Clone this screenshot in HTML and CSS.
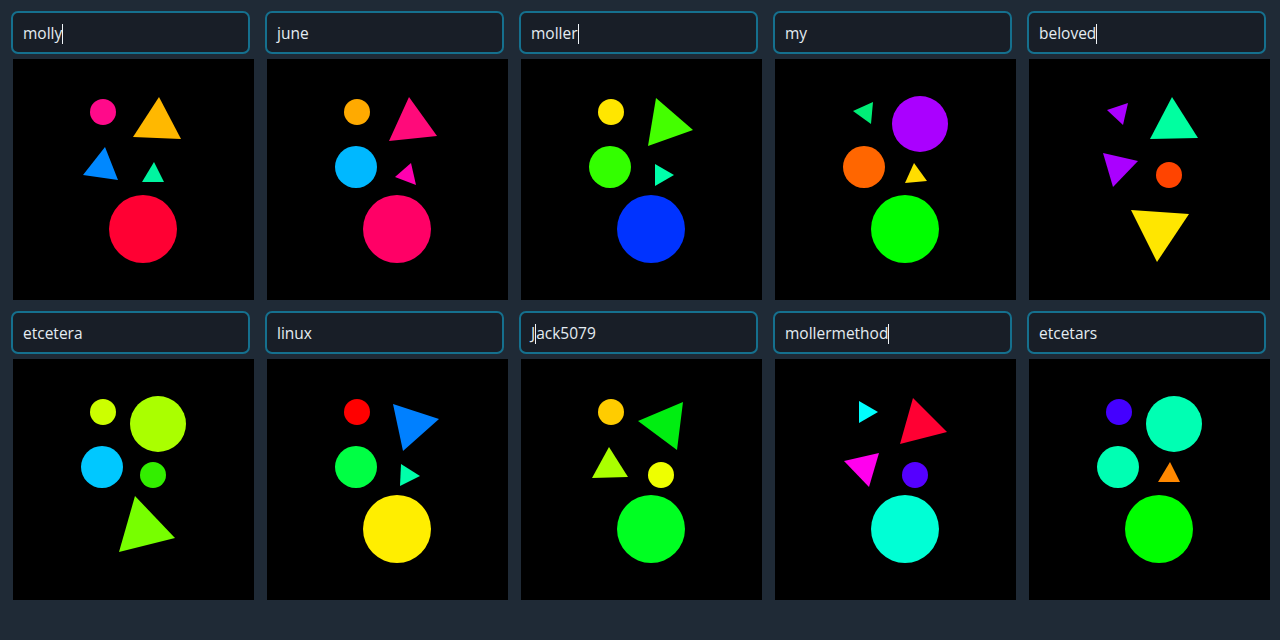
FILE: index.html
```html
<!DOCTYPE html>
<html>
<head>
<meta charset="utf-8">
<link rel="stylesheet" href="styles.css">
</head>
<body>
<div class="grid">
  <div class="cell">
    <div class="field">molly<span class="caret"></span></div>
    <svg class="art" viewBox="0 0 241 241">
      <rect width="241" height="241" fill="#000"/>
      <circle cx="90" cy="53" r="13" fill="#ff0a8a"/>
      <polygon points="146,38 120,78 168,80" fill="#ffb800"/>
      <polygon points="92,88 70,116 105,121" fill="#0088ff"/>
      <polygon points="141,103 129,123 151,123" fill="#00f5a0"/>
      <circle cx="130" cy="170" r="34" fill="#ff0033"/>
    </svg>
  </div>
  <div class="cell">
    <div class="field">june</div>
    <svg class="art" viewBox="0 0 241 241">
      <rect width="241" height="241" fill="#000"/>
      <circle cx="90" cy="53" r="13" fill="#ffaa00"/>
      <polygon points="142,38 122,82 170,77" fill="#ff0a7a"/>
      <circle cx="89" cy="108" r="21" fill="#00b8ff"/>
      <polygon points="144,104 128,118 149,126" fill="#ff00b0"/>
      <circle cx="130" cy="170" r="34" fill="#ff0066"/>
    </svg>
  </div>
  <div class="cell">
    <div class="field">moller<span class="caret"></span></div>
    <svg class="art" viewBox="0 0 241 241">
      <rect width="241" height="241" fill="#000"/>
      <circle cx="90" cy="53" r="13" fill="#ffe600"/>
      <polygon points="135,39 127,87 172,71" fill="#44ff00"/>
      <circle cx="89" cy="108" r="21" fill="#33ff00"/>
      <polygon points="134,105 134,127 153,116" fill="#00ffaa"/>
      <circle cx="130" cy="170" r="34" fill="#0033ff"/>
    </svg>
  </div>
  <div class="cell">
    <div class="field">my</div>
    <svg class="art" viewBox="0 0 241 241">
      <rect width="241" height="241" fill="#000"/>
      <polygon points="98,43 78,52 96,65" fill="#00ee77"/>
      <circle cx="145" cy="65" r="28" fill="#aa00ff"/>
      <circle cx="89" cy="108" r="21" fill="#ff6600"/>
      <polygon points="139,104 130,124 152,122" fill="#ffdd00"/>
      <circle cx="130" cy="170" r="34" fill="#00ff00"/>
    </svg>
  </div>
  <div class="cell">
    <div class="field">beloved<span class="caret"></span></div>
    <svg class="art" viewBox="0 0 241 241">
      <rect width="241" height="241" fill="#000"/>
      <polygon points="99,44 78,51 94,66" fill="#aa00ff"/>
      <polygon points="143,38 121,80 169,79" fill="#00ffa0"/>
      <polygon points="74,94 109,102 84,128" fill="#aa00ff"/>
      <circle cx="140" cy="116" r="13" fill="#ff4400"/>
      <polygon points="102,151 160,155 128,203" fill="#ffe600"/>
    </svg>
  </div>
  <div class="cell">
    <div class="field">etcetera</div>
    <svg class="art" viewBox="0 0 241 241">
      <rect width="241" height="241" fill="#000"/>
      <circle cx="90" cy="53" r="13" fill="#ccff00"/>
      <circle cx="145" cy="65" r="28" fill="#aaff00"/>
      <circle cx="89" cy="108" r="21" fill="#00c8ff"/>
      <circle cx="140" cy="116" r="13" fill="#33ee00"/>
      <polygon points="122,137 106,193 162,179" fill="#77ff00"/>
    </svg>
  </div>
  <div class="cell">
    <div class="field">linux</div>
    <svg class="art" viewBox="0 0 241 241">
      <rect width="241" height="241" fill="#000"/>
      <circle cx="90" cy="53" r="13" fill="#ff0000"/>
      <polygon points="126,45 172,60 136,92" fill="#0080ff"/>
      <circle cx="89" cy="108" r="21" fill="#00ff44"/>
      <polygon points="134,105 133,127 153,117" fill="#00ffaa"/>
      <circle cx="130" cy="170" r="34" fill="#ffee00"/>
    </svg>
  </div>
  <div class="cell">
    <div class="field">J<span class="caret"></span>ack5079</div>
    <svg class="art" viewBox="0 0 241 241">
      <rect width="241" height="241" fill="#000"/>
      <circle cx="90" cy="53" r="13" fill="#ffcc00"/>
      <polygon points="162,43 117,62 156,91" fill="#00ee11"/>
      <polygon points="88,88 71,119 107,118" fill="#aaff00"/>
      <circle cx="140" cy="116" r="13" fill="#eeff00"/>
      <circle cx="130" cy="170" r="34" fill="#00ff22"/>
    </svg>
  </div>
  <div class="cell">
    <div class="field">mollermethod<span class="caret"></span></div>
    <svg class="art" viewBox="0 0 241 241">
      <rect width="241" height="241" fill="#000"/>
      <polygon points="84,42 103,53 84,64" fill="#00ffff"/>
      <polygon points="138,39 172,73 125,85" fill="#ff0033"/>
      <polygon points="69,102 104,94 94,128" fill="#ff00ee"/>
      <circle cx="140" cy="116" r="13" fill="#5500ff"/>
      <circle cx="130" cy="170" r="34" fill="#00ffd5"/>
    </svg>
  </div>
  <div class="cell">
    <div class="field">etcetars</div>
    <svg class="art" viewBox="0 0 241 241">
      <rect width="241" height="241" fill="#000"/>
      <circle cx="90" cy="53" r="13" fill="#4400ff"/>
      <circle cx="145" cy="65" r="28" fill="#00ffb3"/>
      <circle cx="89" cy="108" r="21" fill="#00ffb3"/>
      <polygon points="141,103 129,123 151,123" fill="#ff8800"/>
      <circle cx="130" cy="170" r="34" fill="#00ff00"/>
    </svg>
  </div>
</div>
</body>
</html>
```

FILE: styles.css
```css
html, body {
  margin: 0;
  padding: 0;
  background: #1f2a36;
  height: 100%;
}
body {
  padding: 11px;
  box-sizing: border-box;
  font-family: "Open Sans", "Noto Sans", sans-serif;
}
.grid {
  display: grid;
  grid-template-columns: repeat(5, 243px);
  column-gap: 11px;
  row-gap: 11px;
}
.cell {
  display: flex;
  flex-direction: column;
}
.field {
  box-sizing: border-box;
  width: 239px;
  height: 43px;
  border: 2px solid #15708e;
  border-radius: 7px;
  background: #181e27;
  color: #e4ecf2;
  font-size: 15.5px;
  line-height: 39px;
  padding: 1px 10px 0;
  white-space: nowrap;
}
.caret {
  display: inline-block;
  width: 1px;
  height: 20px;
  background: #f0f4f8;
  vertical-align: -5px;
}
.art {
  display: block;
  width: 241px;
  height: 241px;
  margin-top: 5px;
  margin-left: 2px;
}
```
